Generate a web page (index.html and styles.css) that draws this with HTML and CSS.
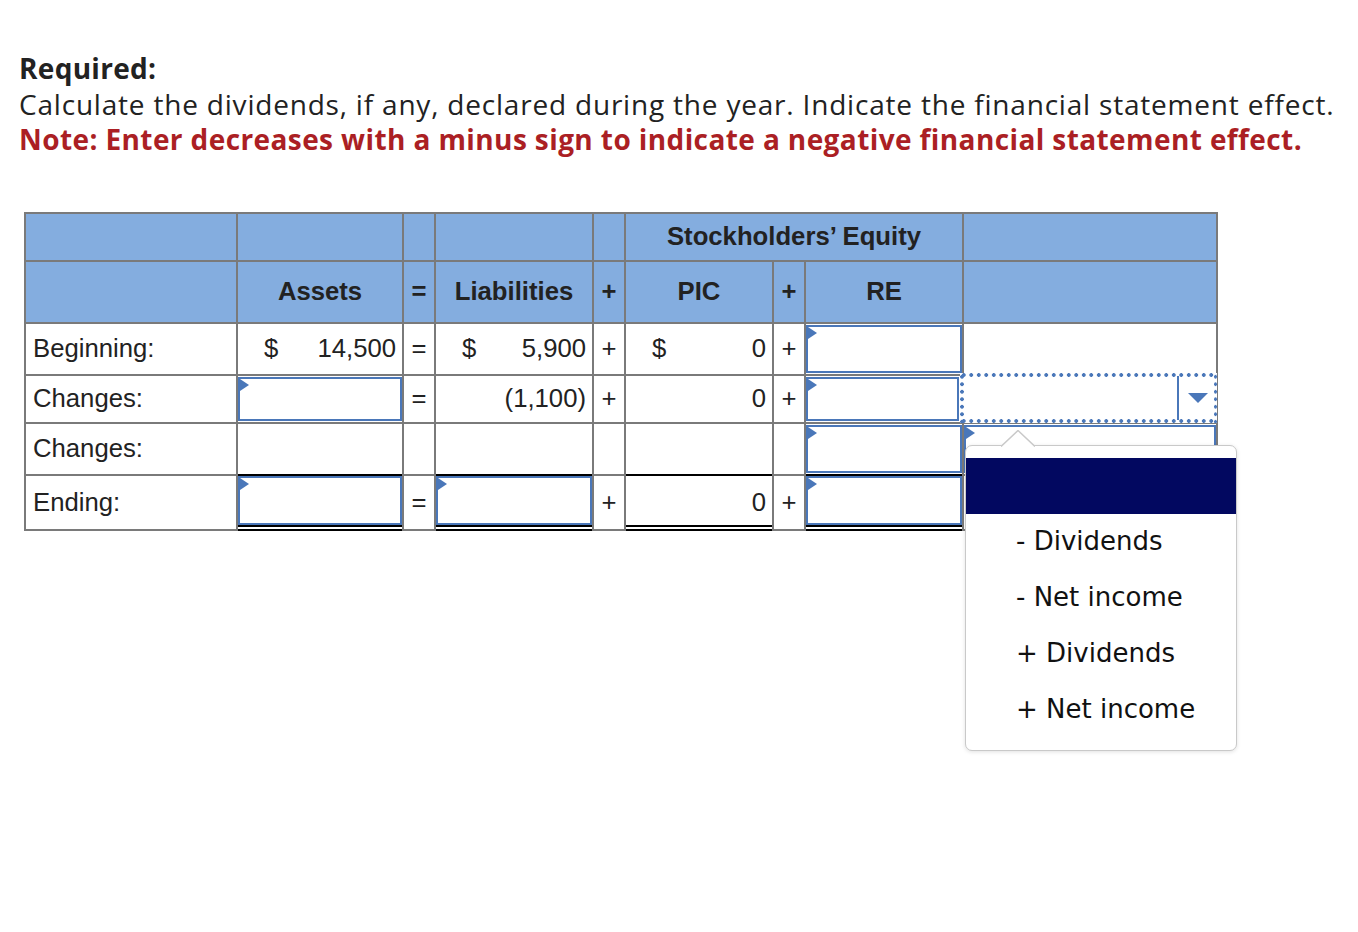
FILE: index.html
```html
<!DOCTYPE html>
<html lang="en">
<head>
<meta charset="utf-8">
<title>Dividends</title>
<link rel="stylesheet" href="styles.css">
</head>
<body>
<div class="page">
  <div class="prompt">
    <p class="req">Required:</p>
    <p class="task">Calculate the dividends, if any, declared during the year. Indicate the financial statement effect.</p>
    <p class="note">Note: Enter decreases with a minus sign to indicate a negative financial statement effect.</p>
  </div>

  <div class="sheet">
    <!-- header row 1 -->
    <div class="c h"></div>
    <div class="c h"></div>
    <div class="c h"></div>
    <div class="c h"></div>
    <div class="c h"></div>
    <div class="c h span3">Stockholders’ Equity</div>
    <div class="c h"></div>
    <!-- header row 2 -->
    <div class="c h"></div>
    <div class="c h">Assets</div>
    <div class="c h">=</div>
    <div class="c h">Liabilities</div>
    <div class="c h">+</div>
    <div class="c h">PIC</div>
    <div class="c h">+</div>
    <div class="c h">RE</div>
    <div class="c h"></div>
    <!-- Beginning -->
    <div class="c lbl">Beginning:</div>
    <div class="c money"><span>$</span><span>14,500</span></div>
    <div class="c op">=</div>
    <div class="c money"><span>$</span><span>5,900</span></div>
    <div class="c op">+</div>
    <div class="c money"><span>$</span><span>0</span></div>
    <div class="c op">+</div>
    <div class="c inp"><div class="box"></div></div>
    <div class="c"></div>
    <!-- Changes -->
    <div class="c lbl">Changes:</div>
    <div class="c inp"><div class="box"></div></div>
    <div class="c op">=</div>
    <div class="c num">(1,100)</div>
    <div class="c op">+</div>
    <div class="c num">0</div>
    <div class="c op">+</div>
    <div class="c inp"><div class="box narrow"></div></div>
    <div class="c selcell">
      <div class="select">
        <span class="sel-val"></span>
        <span class="sel-btn">
          <svg width="20" height="10" viewBox="0 0 20 10"><polygon points="0,0 20,0 10,10" fill="#4a77b9"/></svg>
        </span>
      </div>
      <div class="menu">
        <svg class="menu-tip" width="34" height="17" viewBox="0 0 34 17"><polyline points="0,16.5 17,0.5 34,16.5" fill="#fff" stroke="#c9c9c9" stroke-width="1.5"/></svg>
        <div class="opt active"></div>
        <div class="opt">- Dividends</div>
        <div class="opt">- Net income</div>
        <div class="opt">+ Dividends</div>
        <div class="opt">+ Net income</div>
      </div>
    </div>
    <!-- Changes 2 -->
    <div class="c lbl">Changes:</div>
    <div class="c"></div>
    <div class="c"></div>
    <div class="c"></div>
    <div class="c"></div>
    <div class="c"></div>
    <div class="c"></div>
    <div class="c inp"><div class="box"></div></div>
    <div class="c inp"><div class="box"></div></div>
    <!-- Ending -->
    <div class="c lbl">Ending:</div>
    <div class="c inp tot"><div class="box"></div></div>
    <div class="c op">=</div>
    <div class="c inp tot"><div class="box"></div></div>
    <div class="c op">+</div>
    <div class="c num tot">0</div>
    <div class="c op">+</div>
    <div class="c inp tot"><div class="box"></div></div>
    <div class="c"></div>
  </div>
</div>
</body>
</html>
```

FILE: styles.css
```css
* { box-sizing: border-box; }
html, body { margin: 0; padding: 0; background: #fff; }

.page {
  padding: 51px 0 0 19px;
  min-height: 932px;
}

.prompt p {
  margin: 0;
  font-family: "Open Sans", Lato, sans-serif;
  font-size: 28px;
  line-height: 35.5px;
  color: #222;
  white-space: nowrap;
}
.prompt .req { font-weight: bold; letter-spacing: 0.3px; }
.prompt .task { letter-spacing: 0.8px; }
.prompt .note { font-weight: bold; color: #ab1f24; letter-spacing: 0.4px; }

.sheet {
  margin: 54px 0 0 5px;
  display: inline-grid;
  grid-template-columns: 210px 164px 30px 156px 30px 146px 30px 156px 252px;
  grid-template-rows: 46px 60px 50px 46px 50px 53px;
  gap: 2px;
  padding: 2px;
  background: #7a7a7a;
  font-family: "Liberation Sans", Arial, sans-serif;
  font-size: 25.7px;
  color: #222;
}

.c {
  background: #fff;
  display: flex;
  align-items: center;
  position: relative;
  min-width: 0;
}
.h {
  background: #84addf;
  font-weight: bold;
  justify-content: center;
}
.span3 { grid-column: span 3; }

.lbl { padding-left: 7px; }
.money {
  justify-content: space-between;
  padding: 0 6px 0 26px;
}
.num {
  justify-content: flex-end;
  padding-right: 6px;
}
.op { justify-content: center; }

.inp { align-items: stretch; padding: 1px 0; }
.box {
  flex: 1;
  border: 2px solid #4a77b9;
  background: #fff;
  position: relative;
}
.box::before {
  content: "";
  position: absolute;
  left: 0;
  top: 0;
  border-left: 9px solid #4a77b9;
  border-top: 6px solid transparent;
  border-bottom: 6px solid transparent;
}
.box.narrow { margin-right: 3px; }

/* totals on the Ending row */
.tot {
  box-shadow: 0 -2px 0 #000, 0 2px 0 #000;
}
.tot::after {
  content: "";
  position: absolute;
  left: 0;
  right: 0;
  bottom: 2px;
  height: 2px;
  background: #000;
}
.inp.tot { padding: 0 0 4px; }

/* focused select with a round-dotted focus ring */
.selcell { z-index: 5; }
.select {
  position: absolute;
  top: -3px;
  left: -4px;
  right: -1px;
  bottom: -1px;
  padding: 3px;
  display: flex;
  background:
    radial-gradient(circle, #4a77b9 1.5px, transparent 2px) left top / 7.5px 3.5px repeat-x,
    radial-gradient(circle, #4a77b9 1.5px, transparent 2px) left bottom / 7.5px 3.5px repeat-x,
    radial-gradient(circle, #4a77b9 1.5px, transparent 2px) left top / 3.5px 7.5px repeat-y,
    radial-gradient(circle, #4a77b9 1.5px, transparent 2px) right top / 3.5px 7.5px repeat-y,
    #fff;
}
.sel-val { flex: 1; }
.sel-btn {
  width: 37px;
  border-left: 2px solid #4a77b9;
  display: flex;
  align-items: center;
  justify-content: center;
  padding-left: 2px;
}
.sel-btn svg { display: block; }

.menu {
  position: absolute;
  left: 1px;
  top: 69px;
  width: 272px;
  padding: 12px 0;
  background: #fff;
  border: 1.5px solid #c9c9c9;
  border-radius: 7px;
  box-shadow: 0 1px 4px rgba(0, 0, 0, 0.12);
  font-family: "DejaVu Sans", Verdana, sans-serif;
  font-size: 26px;
  color: #111;
}
.menu-tip {
  position: absolute;
  left: 35px;
  top: -16px;
  display: block;
}
.opt {
  height: 56px;
  display: flex;
  align-items: center;
  padding-left: 50px;
  padding-bottom: 2px;
}
.opt.active { background: #020860; }
```
